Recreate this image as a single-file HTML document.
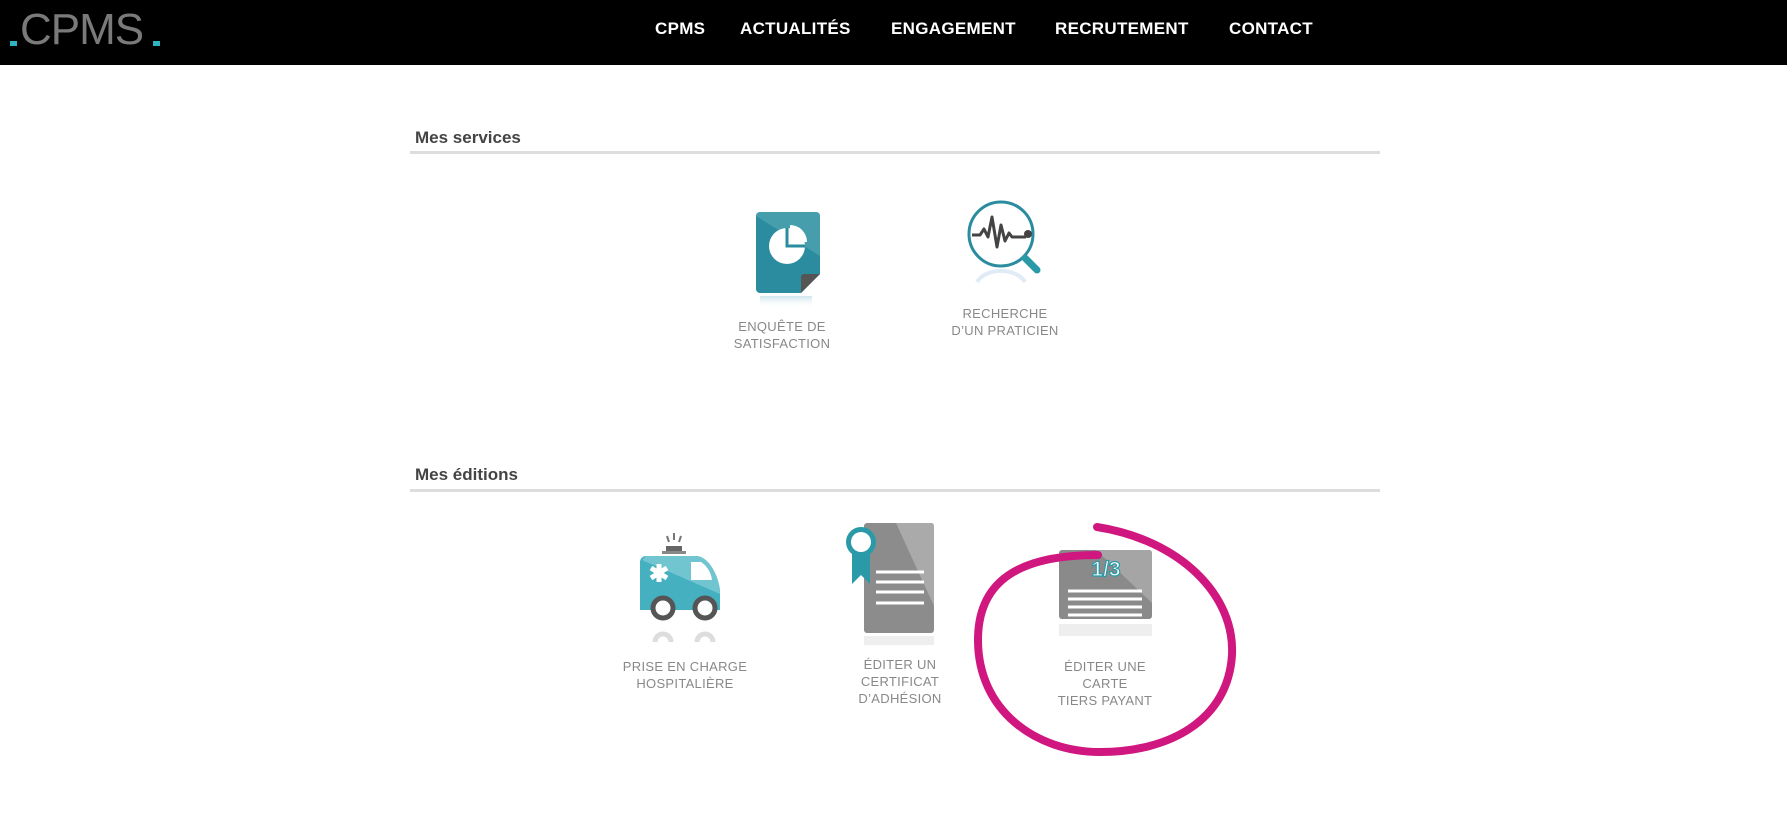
<!DOCTYPE html>
<html><head><meta charset="utf-8"><style>
*{margin:0;padding:0;box-sizing:border-box}
body{width:1787px;height:837px;background:#fff;font-family:"Liberation Sans",sans-serif;position:relative;overflow:hidden}
.hdr{position:absolute;left:0;top:0;width:1787px;height:65px;background:#000}
.logo{position:absolute;left:20px;top:5px;font-size:44px;color:#7a7a7a;font-weight:normal;letter-spacing:-1px}
.dot{position:absolute;width:7px;height:5px;background:#2fb3c0;top:41px}
.nav{position:absolute;top:19px;color:#fff;font-weight:bold;font-size:17px;letter-spacing:0.3px}
.h{position:absolute;left:415px;font-weight:bold;font-size:17px;color:#444}
.ln{position:absolute;left:410px;width:970px;height:3px;background:#ddd}
.lb{position:absolute;font-size:13px;color:#888;text-align:center;line-height:17px;width:200px;letter-spacing:0.3px}
svg{position:absolute}
</style></head><body>
<div class="hdr">
<div class="dot" style="left:10px"></div>
<div class="logo">CPMS</div>
<div class="dot" style="left:153px"></div>
<div class="nav" style="left:655px">CPMS</div>
<div class="nav" style="left:740px">ACTUALITÉS</div>
<div class="nav" style="left:891px">ENGAGEMENT</div>
<div class="nav" style="left:1055px">RECRUTEMENT</div>
<div class="nav" style="left:1229px">CONTACT</div>
</div>
<div class="h" style="top:128px">Mes services</div>
<div class="ln" style="top:151px"></div>
<div class="h" style="top:465px">Mes éditions</div>
<div class="ln" style="top:489px"></div>

<svg style="left:750px;top:205px" width="80" height="110">
<defs><linearGradient id="rf" x1="0" y1="0" x2="0" y2="1"><stop offset="0" stop-color="#9cd" stop-opacity=".5"/><stop offset="1" stop-color="#fff" stop-opacity="0"/></linearGradient></defs>
<path d="M10 7h56a4 4 0 0 1 4 4v58l-19 19H10a4 4 0 0 1-4-4V11a4 4 0 0 1 4-4z" fill="#2a8c9e"/>
<path d="M10 7h56a4 4 0 0 1 4 4v40L6 11a4 4 0 0 1 4-4z" fill="#5aaab8" opacity=".6"/>
<path d="M70 69l-19 19V72a3 3 0 0 1 3-3z" fill="#555"/>
<circle cx="37" cy="41" r="18" fill="#fff"/>
<path d="M40 20a17 17 0 0 1 17 17H40z" fill="#fff"/><path d="M37 23v18h18" stroke="#2a8c9e" stroke-width="3" fill="none"/>
<rect x="10" y="91" width="52" height="12" fill="url(#rf)"/>
</svg>

<svg style="left:962px;top:198px" width="90" height="92">
<circle cx="39" cy="36" r="32" fill="#fff" stroke="#2a8c9e" stroke-width="3"/>
<path d="M63 60l12 12" stroke="#2a9aa8" stroke-width="7" stroke-linecap="round"/>
<path d="M10 37h8l4-6 4 8 4-20 5 30 4-22 4 16 4-8 3 4h14" stroke="#444" stroke-width="3" fill="none" stroke-linejoin="round"/>
<circle cx="66" cy="36" r="4" fill="#444"/>
<path d="M15 84a26 18 0 0 1 48 0" stroke="#cde" stroke-width="4" fill="none" opacity=".6"/>
</svg>

<div class="lb" style="left:682px;top:318px">ENQUÊTE DE<br>SATISFACTION</div>
<div class="lb" style="left:905px;top:305px">RECHERCHE<br>D’UN PRATICIEN</div>

<svg style="left:636px;top:530px" width="100" height="118">
<path d="M33 12l-2-6M38 10V3M43 12l2-6" stroke="#777" stroke-width="2"/>
<rect x="30" y="16" width="16" height="6" fill="#666"/><rect x="26" y="21" width="24" height="3" fill="#888"/>
<path d="M10 26h50c12 0 22 18 24 34v20H4V32a6 6 0 0 1 6-6z" fill="#45b0c0"/>
<path d="M10 26h50c12 0 22 18 24 34v4L6 30z" fill="#8fd3dc" opacity=".6"/>
<path d="M55 32h10c6 4 10 10 11 18H55z" fill="#fff"/>
<path d="M23 34v18M15 38l16 10M15 48l16-10" stroke="#fff" stroke-width="5"/>
<circle cx="27" cy="78" r="10" fill="#fff" stroke="#555" stroke-width="5"/>
<circle cx="69" cy="78" r="10" fill="#fff" stroke="#555" stroke-width="5"/>
<path d="M19 112a8 8 0 0 1 16 0M61 112a8 8 0 0 1 16 0" stroke="#ddd" stroke-width="5" fill="none"/>
</svg>

<svg style="left:846px;top:520px" width="94" height="125">
<rect x="18" y="3" width="70" height="110" rx="3" fill="#8c8c8c"/>
<path d="M50 3h35a3 3 0 0 1 3 3v80z" fill="#aaa"/>
<path d="M30 52h48M30 62h48M30 72h48M30 83h48" stroke="#fff" stroke-width="3"/>
<path d="M6 30v34l9-9 9 9V30z" fill="#2a9aa8"/>
<circle cx="15" cy="22" r="15" fill="#2a9aa8"/><circle cx="15" cy="22" r="10" fill="#fff"/>
<rect x="18" y="116" width="70" height="9" fill="#eee"/>
</svg>

<svg style="left:1056px;top:545px" width="100" height="100">
<rect x="3" y="5" width="93" height="69" rx="3" fill="#8a8a8a"/>
<path d="M40 5h53a3 3 0 0 1 3 3v50z" fill="#a5a5a5"/>
<path d="M12 46h74M12 54h74M12 62h74M12 70h74" stroke="#fff" stroke-width="3"/>
<text x="50" y="31" text-anchor="middle" font-family="Liberation Sans" font-weight="bold" font-size="21" fill="#fff" stroke="#2a9aa8" stroke-width="1.2">1/3</text>
<rect x="3" y="79" width="93" height="12" fill="#eee"/>
</svg>

<div class="lb" style="left:585px;top:658px">PRISE EN CHARGE<br>HOSPITALIÈRE</div>
<div class="lb" style="left:800px;top:656px">ÉDITER UN<br>CERTIFICAT<br>D’ADHÉSION</div>
<div class="lb" style="left:1005px;top:658px">ÉDITER UNE<br>CARTE<br>TIERS PAYANT</div>

<svg style="left:0;top:0" width="1787" height="837">
<path d="M1097 527 C1180 540 1235 595 1232 655 C1228 720 1170 752 1100 752 C1035 752 978 710 978 640 C978 580 1020 555 1098 555" stroke="#d0177f" stroke-width="8" fill="none" stroke-linecap="round"/>
</svg>
</body></html>
